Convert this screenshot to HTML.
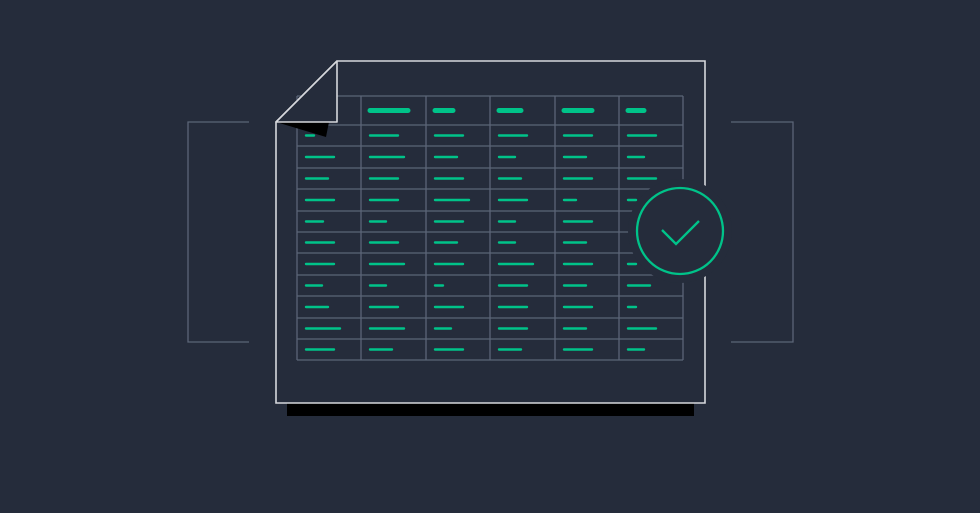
<!DOCTYPE html>
<html><head><meta charset="utf-8"><style>
html,body{margin:0;padding:0;background:#252c3b;width:980px;height:513px;overflow:hidden}
</style></head><body>
<svg id="s" width="980" height="513" viewBox="0 0 980 513" xmlns="http://www.w3.org/2000/svg">
<rect width="980" height="513" fill="#252c3b"/>
<g fill="none" stroke="#5b6577" stroke-width="1.3">
<path d="M249 122H188V342H249"/>
<path d="M731 122H793V342H731"/>
</g>
<rect x="287" y="403" width="407" height="13" fill="#000"/>
<path d="M337 61H705V403H276V122Z" fill="#252c3b" stroke="#d6d8dc" stroke-width="1.6"/>
<g id="tbl" stroke="#5b6577" stroke-width="1.3" fill="none"></g>
<g id="dash" stroke="#00c389" stroke-linecap="round" fill="none"></g>
<circle cx="680" cy="231" r="52" fill="#252c3b"/>
<circle cx="680" cy="231" r="43" fill="none" stroke="#00c389" stroke-width="2.3"/>
<path d="M662 230L676 244L699 221" fill="none" stroke="#00c389" stroke-width="2.3"/>
<polygon points="276,122 329,122 326,137" fill="#000"/>
<path d="M337 61L276 122H337Z" fill="#252c3b" stroke="#d6d8dc" stroke-width="1.6" stroke-linejoin="round"/>
</svg>
<script>
var ns="http://www.w3.org/2000/svg";
function el(p,t,a){var e=document.createElementNS(ns,t);for(var k in a)e.setAttribute(k,a[k]);document.getElementById(p).appendChild(e);}
var cols=[297,361,426,490,555,619,683];
var rows=[96,125,146,168,189,211,232,253,275,296,318,339,360];
cols.forEach(function(x){el('tbl','line',{x1:x,y1:96,x2:x,y2:360});});
rows.forEach(function(y){el('tbl','line',{x1:297,y1:y,x2:683,y2:y});});
var head=[0,38,18,22,28,16];
head.forEach(function(l,i){if(l)el('dash','line',{x1:cols[i]+9,y1:110.5,x2:cols[i]+9+l,y2:110.5,'stroke-width':5});});
var L=[[8,28,28,28,28,28],[28,34,22,16,22,16],[22,28,28,22,28,28],[28,28,34,28,12,8],[17,16,28,16,28,0],[28,28,22,16,22,0],[28,34,28,34,28,8],[16,16,8,28,22,22],[22,28,28,28,28,8],[34,34,16,28,22,28],[28,22,28,22,28,16]];
L.forEach(function(r,j){var y=(rows[j+1]+rows[j+2])/2;r.forEach(function(l,i){if(l)el('dash','line',{x1:cols[i]+9,y1:y,x2:cols[i]+9+l,y2:y,'stroke-width':2.4});});});
</script>
</body></html>
